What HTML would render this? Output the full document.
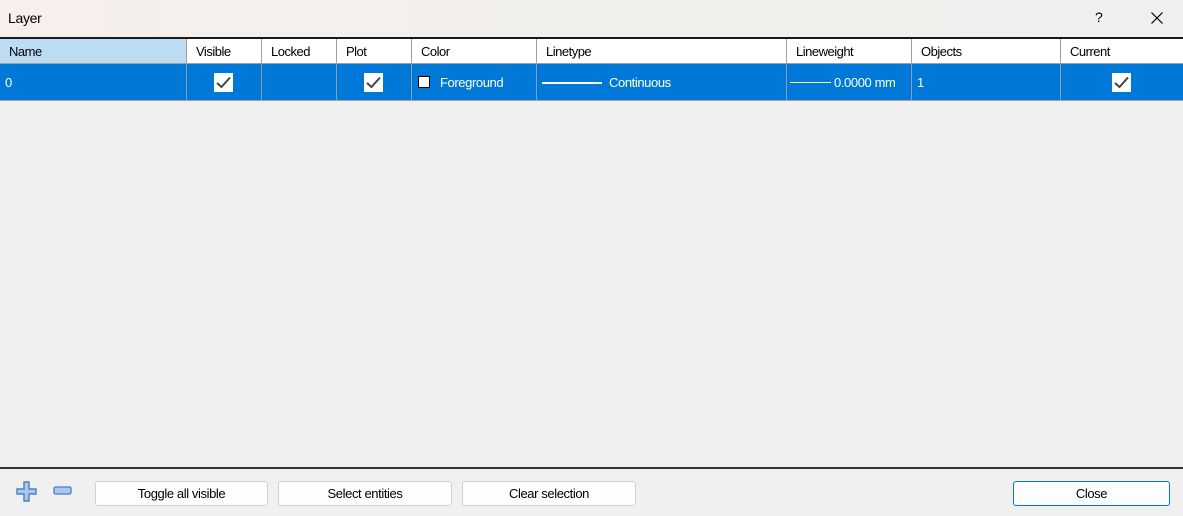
<!DOCTYPE html>
<html><head><style>
*{margin:0;padding:0;box-sizing:border-box}
body{width:1183px;height:516px;background:#f0f0f0;font-family:"Liberation Sans",sans-serif;font-size:13px;position:relative;overflow:hidden;color:#000}
.title{position:absolute;left:0;top:0;width:1183px;height:37px;background:linear-gradient(90deg,#f6efeb,#eef1ee);}
.title .t{position:absolute;left:8px;top:10px;font-size:14px;letter-spacing:-0.3px}
.line{position:absolute;left:0;width:1183px;height:2px;background:#1a1a1a}
.hdr{position:absolute;top:39px;height:25px;background:#fff;border-right:1px solid #a0a0a0;border-bottom:1px solid #a0a0a0;padding:5px 0 0 9px;font-size:13px;letter-spacing:-0.5px}
.row{position:absolute;top:64px;height:37px;background:#0078d7;border-right:1px solid #8aa0b4;border-bottom:1px solid #a0a0a0;color:#fff;padding:11px 0 0 5px;letter-spacing:-0.4px}
.cb{position:absolute;top:9px;width:19px;height:19px;background:#fff}
.cb svg{position:absolute;left:2px;top:3px}
.btn{position:absolute;top:481px;height:25px;background:#fdfdfd;border:1px solid #d0d0d0;border-radius:3px;text-align:center;line-height:23px;font-size:13px;letter-spacing:-0.4px}
</style></head><body>
<div class="title"><span class="t">Layer</span>
<span style="position:absolute;left:1095px;top:9px;font-size:14px">?</span>
<svg style="position:absolute;left:1151px;top:12px" width="12" height="12"><path d="M0.5 0.5L11.5 11.5M11.5 0.5L0.5 11.5" stroke="#000" stroke-width="1.2"/></svg>
</div>
<div class="line" style="top:37px"></div>
<div class="hdr" style="left:0;width:187px;background:#bcdcf4">Name</div>
<div class="hdr" style="left:187px;width:75px">Visible</div>
<div class="hdr" style="left:262px;width:75px">Locked</div>
<div class="hdr" style="left:337px;width:75px">Plot</div>
<div class="hdr" style="left:412px;width:125px">Color</div>
<div class="hdr" style="left:537px;width:250px">Linetype</div>
<div class="hdr" style="left:787px;width:125px">Lineweight</div>
<div class="hdr" style="left:912px;width:149px">Objects</div>
<div class="hdr" style="left:1061px;width:122px;border-right:none">Current</div>

<div class="row" style="left:0;width:187px">0</div>
<div class="row" style="left:187px;width:75px"><div class="cb" style="left:27px"><svg width="15" height="13"><path d="M1 7L5.5 11L14 1.5" stroke="#444" stroke-width="2" fill="none"/></svg></div></div>
<div class="row" style="left:262px;width:75px"></div>
<div class="row" style="left:337px;width:75px"><div class="cb" style="left:27px"><svg width="15" height="13"><path d="M1 7L5.5 11L14 1.5" stroke="#444" stroke-width="2" fill="none"/></svg></div></div>
<div class="row" style="left:412px;width:125px"><span style="position:absolute;left:6px;top:12px;width:12px;height:12px;background:#fff;border:1.5px solid #000"></span><span style="position:absolute;left:28px;top:11px">Foreground</span></div>
<div class="row" style="left:537px;width:250px"><span style="position:absolute;left:5px;top:18px;width:60px;height:2px;background:#fff"></span><span style="position:absolute;left:72px;top:11px">Continuous</span></div>
<div class="row" style="left:787px;width:125px"><span style="position:absolute;left:3px;top:18px;width:41px;height:1px;background:#fff"></span><span style="position:absolute;left:47px;top:11px">0.0000 mm</span></div>
<div class="row" style="left:912px;width:149px">1</div>
<div class="row" style="left:1061px;width:122px;border-right:none"><div class="cb" style="left:51px"><svg width="15" height="13"><path d="M1 7L5.5 11L14 1.5" stroke="#444" stroke-width="2" fill="none"/></svg></div></div>

<div class="line" style="top:467px;height:1.5px;background:#333"></div>
<svg style="position:absolute;left:16px;top:481px" width="22" height="22"><path d="M8 1H13V8H20V13H13V20H8V13H1V8H8Z" fill="#a8c8ec" stroke="#4a7fc0" stroke-width="1.4"/></svg>
<svg style="position:absolute;left:53px;top:486px" width="20" height="10"><rect x="1" y="1" width="17" height="7" rx="1.5" fill="#a8c8ec" stroke="#4a7fc0" stroke-width="1.3"/></svg>
<div class="btn" style="left:95px;width:173px">Toggle all visible</div>
<div class="btn" style="left:278px;width:174px">Select entities</div>
<div class="btn" style="left:462px;width:174px">Clear selection</div>
<div class="btn" style="left:1013px;width:157px;border:1px solid #0078d7">Close</div>
</body></html>
